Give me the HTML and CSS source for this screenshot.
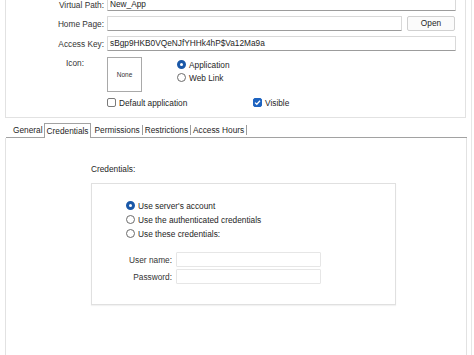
FILE: index.html
```html
<!DOCTYPE html>
<html>
<head>
<meta charset="utf-8">
<title>Application properties</title>
<link rel="stylesheet" href="styles.css">
</head>
<body>
<div class="window">
  <div class="props">
    <div class="row top">
      <label class="lbl">Virtual Path:</label>
      <div class="field wide">New_App</div>
    </div>
    <div class="row">
      <label class="lbl">Home Page:</label>
      <div class="field home"></div>
      <div class="btn">Open</div>
    </div>
    <div class="row">
      <label class="lbl">Access Key:</label>
      <div class="field wide">sBgp9HKB0VQeNJfYHHk4hP$Va12Ma9a</div>
    </div>
    <div class="row iconrow">
      <label class="lbl left">Icon:</label>
      <div class="iconbox">None</div>
      <div class="radios">
        <div class="opt"><span class="radio on"></span>Application</div>
        <div class="opt"><span class="radio"></span>Web Link</div>
      </div>
    </div>
    <div class="row checks">
      <div class="opt def"><span class="check"></span>Default application</div>
      <div class="opt"><span class="check on"><svg viewBox="0 0 9 9" width="9" height="9"><path d="M2 4.6 L3.8 6.3 L7 2.8" fill="none" stroke="#fff" stroke-width="1.3"/></svg></span>Visible</div>
    </div>
  </div>

  <div class="tabs">
    <span class="tab first">General</span>
    <span class="tab sel">Credentials</span>
    <span class="tab">Permissions</span>
    <span class="tab">Restrictions</span>
    <span class="tab">Access Hours</span>
  </div>

  <div class="page">
    <div class="caption">Credentials:</div>
    <div class="group">
      <div class="opt"><span class="radio on"></span>Use server's account</div>
      <div class="opt"><span class="radio"></span>Use the authenticated credentials</div>
      <div class="opt"><span class="radio"></span>Use these credentials:</div>
      <div class="creds">
        <div class="crow"><label class="clbl">User name:</label><div class="field cfield"></div></div>
        <div class="crow"><label class="clbl">Password:</label><div class="field cfield"></div></div>
      </div>
    </div>
  </div>
</div>
</body>
</html>
```

FILE: styles.css
```css
/* application properties dialog */
html, body {margin: 0; padding: 0; background: #fff;}
body {font-family: "Liberation Sans", Arial, sans-serif; font-size: 8.3px; color: #1e1e1e; overflow: hidden;}

.window {width: 466px; height: 355px; margin-left: 5px; border-right: 1px solid #e6e6e6; display: flex; flex-direction: column;}

/* top panel */
.props {width: 461px; height: 124px; flex: none; margin-top: -6px; border: 1px solid #e2e2e2; padding-top: 1px; box-sizing: border-box; display: flex; flex-direction: column; gap: 5px;}
.row {display: flex; align-items: center; height: 15px; padding-left: 48px;}
.row.top .lbl, .row.top .field {padding-top: 2px;}
.row.top .field {line-height: 11px;}
.lbl {width: 50px; text-align: right; margin-right: 3px; color: #333; white-space: nowrap;}
.lbl.left {text-align: left; padding-left: 12px; width: 38px; align-self: flex-start; margin-top: 1px;}
.field {height: 15px; box-sizing: border-box; border: 1px solid #d9d9d9; border-bottom-color: #9c9c9c; background: #fff; line-height: 13px; padding-left: 2px; white-space: nowrap; overflow: hidden; border-radius: 1px;}
.field.wide {width: 349px;}
.field.home {width: 295px;}
.btn {width: 48px; height: 15px; margin-left: 5px; box-sizing: border-box; border: 1px solid #d0d0d0; border-radius: 2px; background: #fbfbfb; text-align: center; line-height: 13px;}

.iconrow {height: 35px; align-items: flex-start; margin-top: 1px;}
.iconbox {width: 35px; height: 35px; box-sizing: border-box; border: 1px solid #a9a9a9; display: flex; align-items: center; justify-content: center; font-size: 6.5px; color: #333;}
.radios {margin-left: 35px; padding-top: 3px; display: flex; flex-direction: column; gap: 4px;}

.opt {display: flex; align-items: center; gap: 3px; white-space: nowrap; height: 9px;}
.radio {width: 9px; height: 9px; box-sizing: border-box; border-radius: 50%; border: 1px solid #6b6b6b; background: #fff;}
.radio.on {border: 3px solid #1a58a8;}
.check {width: 9px; height: 9px; box-sizing: border-box; border: 1px solid #7a7a7a; border-radius: 2px; display: flex;}
.check.on {background: #1d63c0; border-color: #1d63c0;}
.check svg {display: block; margin: -1px;}

.checks {height: 9px; padding-left: 101px; margin-top: 1px;}
.checks .def {width: 146px;}

/* tab strip */
.tabs {display: flex; flex: none; align-items: flex-end; height: 15px; margin-top: 5px; margin-left: 1px; width: 461px; border-bottom: 1px solid #a2a2a2; box-sizing: border-box;}
.tab {height: 10px; line-height: 10px; padding: 0 2px 0 2px; border-right: 1px solid #9c9c9c; margin-bottom: 2px;}
.tab.first {padding-left: 7px; border-right: 0; padding-right: 1px;}
.tab.sel {height: 14px; line-height: 14px; margin-bottom: -1px; border: 1px solid #a2a2a2; border-bottom: 0; background: #fff; padding: 0 1px 0 2px; margin-right: 2px;}

/* credentials page */
.page {flex: 1; border-left: 1px solid #e2e2e2; border-right: 1px solid #e2e2e2; width: 462px; box-sizing: border-box; padding-left: 85px; padding-top: 26px;}
.caption {height: 10px; line-height: 10px;}
.group {width: 305px; height: 122px; box-sizing: border-box; margin-top: 9px; border: 1px solid #e0e0e0; box-shadow: 0 1px 1px rgba(0,0,0,0.05); padding: 17px 0 0 34px; display: flex; flex-direction: column; gap: 5px;}
.creds {margin-top: 9px; display: flex; flex-direction: column; gap: 2px;}
.crow {display: flex; align-items: center;}
.clbl {width: 47px; text-align: right; margin-left: -1px; margin-right: 4px; color: #333;}
.field.cfield {width: 145px; border-color: #e6e6e6; border-bottom-color: #e6e6e6;}
```
